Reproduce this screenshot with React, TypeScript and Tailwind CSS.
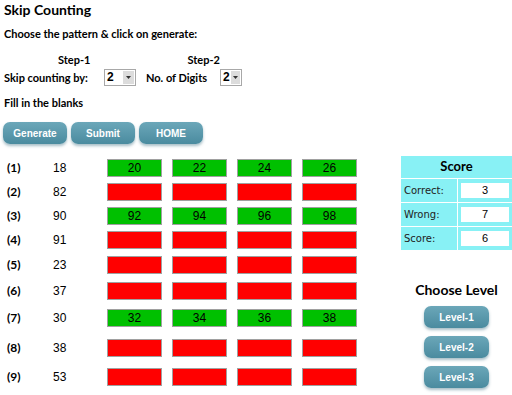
import React from "react";

const rows: { n: string; v: string; vals: string[] | null; h: number }[] = [
  { n: "(1)", v: "18", vals: ["20", "22", "24", "26"], h: 24 },
  { n: "(2)", v: "82", vals: null, h: 24 },
  { n: "(3)", v: "90", vals: ["92", "94", "96", "98"], h: 24 },
  { n: "(4)", v: "91", vals: null, h: 25 },
  { n: "(5)", v: "23", vals: null, h: 26 },
  { n: "(6)", v: "37", vals: null, h: 27 },
  { n: "(7)", v: "30", vals: ["32", "34", "36", "38"], h: 30 },
  { n: "(8)", v: "38", vals: null, h: 29 },
  { n: "(9)", v: "53", vals: null, h: 26 },
];

const heading = { fontFamily: "Lato, 'Open Sans', sans-serif" };

function Btn({ label, cls }: { label: string; cls: string }) {
  return (
    <div
      className={`flex items-center justify-center rounded-[7px] bg-gradient-to-b from-[#6ba7b9] to-[#4a8b9f] text-white font-bold text-[10px] shadow-[0_2px_3px_rgba(60,110,130,0.45)] ${cls}`}
      style={{ fontFamily: "'Liberation Sans', Arial, sans-serif" }}
    >
      {label}
    </div>
  );
}

function Select({ w }: { w: string }) {
  return (
    <div className={`flex h-[17px] items-stretch border border-[#a8a8a8] bg-white ${w}`}>
      <div className="flex-1 pl-[2px] text-[12px] leading-[15px] text-black" style={{ fontFamily: "'Liberation Sans', Arial, sans-serif" }}>2</div>
      <div className="m-[1px] flex w-[11px] items-center justify-center bg-[#dcdcdc]">
        <svg width="5" height="3" viewBox="0 0 5 3"><path d="M0 0h5L2.5 3z" fill="#333" /></svg>
      </div>
    </div>
  );
}

export default function App() {
  return (
    <div className="relative h-[395px] w-[512px] overflow-hidden bg-white text-black" style={heading}>
      <div className="pl-[4px] pt-[1px] text-[14px] font-bold leading-[18px]">Skip Counting</div>
      <div className="mt-[8px] pl-[4px] text-[11px] font-bold leading-[14px]">Choose the pattern &amp; click on generate:</div>
      <div className="mt-[12px] flex text-[11px] font-bold leading-[14px]">
        <div className="ml-[58px]">Step-1</div>
        <div className="ml-[97px]">Step-2</div>
      </div>
      <div className="mt-[2px] flex items-center text-[11px] font-bold leading-[17px]">
        <div className="ml-[4px] w-[100px]">Skip counting by:</div>
        <Select w="w-[32px]" />
        <div className="ml-[10px] w-[74px]">No. of Digits</div>
        <Select w="w-[22px]" />
      </div>
      <div className="mt-[10px] pl-[4px] text-[11px] font-bold leading-[14px]">Fill in the blanks</div>
      <div className="mt-[12px] flex gap-[4px] pl-[3px]">
        <Btn label="Generate" cls="h-[22px] w-[64px]" />
        <Btn label="Submit" cls="h-[22px] w-[64px]" />
        <Btn label="HOME" cls="h-[22px] w-[64px]" />
      </div>
      <div className="mt-[12px] flex">
        <div className="flex w-[390px] flex-col pt-[3px]">
          {rows.map((r) => (
            <div key={r.n} className="flex items-start" style={{ height: r.h }}>
              <div className="flex h-[18px] w-[53px] items-center pl-[7px] text-[12px] font-bold">{r.n}</div>
              <div className="flex h-[18px] w-[54px] items-center text-[12px]" style={{ fontFamily: "'Liberation Sans', Arial, sans-serif" }}>{r.v}</div>
              <div className="flex gap-[10px]">
                {[0, 1, 2, 3].map((i) => (
                  <div
                    key={i}
                    className={`flex h-[18px] w-[55px] items-center justify-center border border-[#a0a0a0] text-[12px] ${r.vals ? "bg-[#00c000]" : "bg-[#ff0000]"}`}
                    style={{ fontFamily: "'Liberation Sans', Arial, sans-serif" }}
                  >
                    {r.vals ? r.vals[i] : ""}
                  </div>
                ))}
              </div>
            </div>
          ))}
        </div>
        <div className="ml-[11px] flex w-[111px] flex-col">
          <div className="bg-[#88f1f5]">
            <div className="flex h-[23px] items-center justify-center border-b border-white text-[13px] font-bold">Score</div>
            {[
              ["Correct:", "3", 24],
              ["Wrong:", "7", 24],
              ["Score:", "6", 23],
            ].map(([l, v, h]) => (
              <div key={l as string} className="flex border-b border-white last:border-b-0" style={{ height: h as number }}>
                <div className="flex w-[57px] items-center border-r border-white pl-[3px] text-[10px] text-[#222]" style={{ fontFamily: "'DejaVu Sans', Verdana, sans-serif" }}>{l}</div>
                <div className="flex flex-1 items-center px-[3px]">
                  <div className="flex h-[15px] w-full items-center justify-center bg-white text-[11px]" style={{ fontFamily: "'Liberation Sans', Arial, sans-serif" }}>{v}</div>
                </div>
              </div>
            ))}
          </div>
          <div className="mt-[31px] text-center text-[14px] font-bold leading-[18px]">Choose Level</div>
          <div className="mt-[7px] flex flex-col items-center gap-[8px]">
            <Btn label="Level-1" cls="h-[22px] w-[65px]" />
            <Btn label="Level-2" cls="h-[22px] w-[65px]" />
            <Btn label="Level-3" cls="h-[22px] w-[65px]" />
          </div>
        </div>
      </div>
    </div>
  );
}
